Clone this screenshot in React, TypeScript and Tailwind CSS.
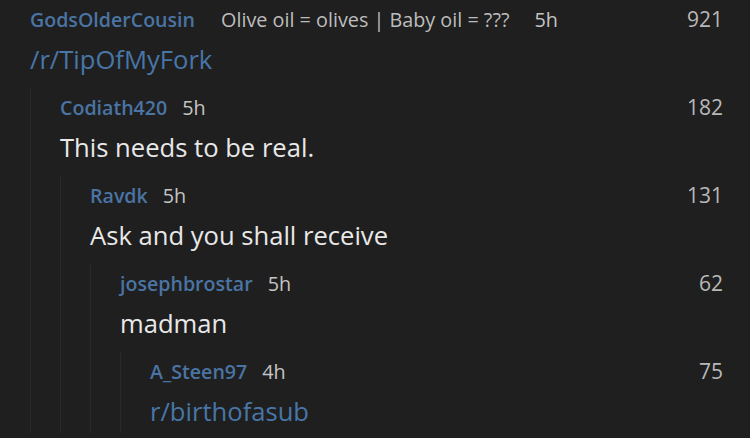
import React from "react";

type C = {
  user: string;
  title?: string;
  time: string;
  score: string;
  body: string;
  link?: boolean;
  child?: C;
};

const data: C = {
  user: "GodsOlderCousin",
  title: "Olive oil = olives | Baby oil = ???",
  time: "5h",
  score: "921",
  body: "/r/TipOfMyFork",
  link: true,
  child: {
    user: "Codiath420",
    time: "5h",
    score: "182",
    body: "This needs to be real.",
    child: {
      user: "Ravdk",
      time: "5h",
      score: "131",
      body: "Ask and you shall receive",
      child: {
        user: "josephbrostar",
        time: "5h",
        score: "62",
        body: "madman",
        child: {
          user: "A_Steen97",
          time: "4h",
          score: "75",
          body: "r/birthofasub",
          link: true,
        },
      },
    },
  },
};

function Comment({ c }: { c: C }) {
  return (
    <div>
      <div className="flex h-[39px] items-center">
        <span className="text-[19.6px] font-semibold text-[#4a74a3]">{c.user}</span>
        {c.title && (
          <span className="ml-[26px] text-[19.8px] text-[#bdbdbd]">{c.title}</span>
        )}
        <span className={`${c.title ? "ml-[25px]" : "ml-[15px]"} text-[19.8px] text-[#c4c4c4]`}>
          {c.time}
        </span>
        <span className="ml-auto text-[21px] text-[#b8b8b8]">{c.score}</span>
      </div>
      <div
        className={`flex h-[42px] items-center text-[25.6px] ${
          c.link ? "text-[#4876a7]" : "text-[#e8e8e8]"
        }`}
      >
        {c.body}
      </div>
      {c.child && (
        <div className="mt-[7px] border-l border-[#292929] pl-[29px]">
          <Comment c={c.child} />
        </div>
      )}
    </div>
  );
}

export default function App() {
  return (
    <div
      className="h-[438px] w-[750px] overflow-hidden bg-[#1f1f1f] pl-[30px] pr-[27px]"
      style={{ fontFamily: "'Open Sans', sans-serif" }}
    >
      <Comment c={data} />
    </div>
  );
}
